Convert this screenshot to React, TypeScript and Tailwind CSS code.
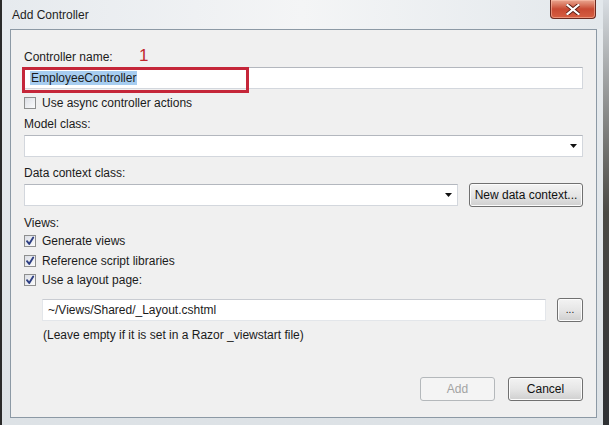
import React from 'react';

const Check = ({ checked }: { checked?: boolean }) => (
  <span className="w-[12px] h-[12px] shrink-0 border border-[#8e8f8f] bg-gradient-to-br from-[#dcdfe6] to-[#fbfbfb] flex items-center justify-center">
    {checked && (
      <svg width="10" height="10" viewBox="0 0 10 10">
        <path d="M2 5.2 L4.2 8 L8.2 1.6" fill="none" stroke="#2e3f82" strokeWidth="1.9" strokeLinecap="round" strokeLinejoin="round" />
      </svg>
    )}
  </span>
);

const Arrow = () => (
  <svg width="7" height="4" viewBox="0 0 7 4" className="shrink-0">
    <path d="M0 0 H7 L3.5 4 Z" fill="#111" />
  </svg>
);

const Btn = ({ children, disabled, className = '' }: { children: React.ReactNode; disabled?: boolean; className?: string }) => (
  <div
    className={`h-[24px] flex items-center justify-center rounded-[3px] border ${
      disabled
        ? 'border-[#b4b8bb] bg-[#f4f4f4] text-[#a3a3a3]'
        : 'border-[#707070] bg-gradient-to-b from-[#f3f3f3] via-[#e6e6e6] to-[#cfcfcf] text-[#111] shadow-[inset_0_0_0_1px_#fcfcfc]'
    } ${className}`}
  >
    {children}
  </div>
);

export default function App() {
  return (
    <div className="w-[609px] h-[425px] flex overflow-hidden bg-[#333] font-['Liberation_Sans',Arial,sans-serif] text-[12px] leading-[16px] text-[#1b1b1b]">
      {/* window */}
      <div className="w-[603px] h-full flex flex-col border-l-2 border-[#2a2a2a] bg-gradient-to-b from-[#e8ecef] to-[#dde2e6] relative">
        {/* title bar */}
        <div className="h-[29px] shrink-0 flex items-center pl-[10px] bg-gradient-to-r from-[#e6eaee] via-[#f4f5f6] to-[#e3e8ec]">
          <span className="text-[12px] text-[#1e1e1e]">Add Controller</span>
        </div>
        <div className="absolute left-[548px] top-0 w-[46px] h-[19px] rounded-b-[4px] border border-t-0 border-[#6a2a20] bg-gradient-to-b from-[#e9a690] via-[#c84a33] to-[#d65f42] flex items-center justify-center shadow-[inset_0_0_0_1px_rgba(255,200,180,0.5)]">
          <svg width="14" height="11" viewBox="0 0 14 11">
            <path d="M1.5 1 L12.5 10 M12.5 1 L1.5 10" stroke="#5a1c12" strokeWidth="4" strokeLinecap="square" />
            <path d="M1.5 1 L12.5 10 M12.5 1 L1.5 10" stroke="#fff" strokeWidth="2.2" strokeLinecap="square" />
          </svg>
        </div>

        {/* content panel */}
        <div className="ml-[8px] w-[587px] h-[389px] border border-[#8c99a5] bg-[#f0f0f0] flex flex-col px-[13px]">
          <div className="mt-[19px] relative">
            Controller name:
            <span className="absolute left-[115px] top-[-2px] text-[17px] leading-[18px] text-[#c0272d]">1</span>
          </div>

          <div className="mt-[2px] h-[22px] relative border border-[#d3d7dd] border-t-[#b3b7be] bg-white flex items-center pl-[5px]">
            <span className="bg-[#a7cdf0] leading-[14px] px-[1px]">EmployeeController</span>
            <div className="absolute left-[-3px] top-[-1px] w-[227px] h-[26px] border-[3px] border-[#c52639]" />
          </div>

          <div className="mt-[6px] flex items-center gap-[6px]">
            <Check />
            <span>Use async controller actions</span>
          </div>

          <div className="mt-[5px]">Model class:</div>
          <div className="mt-[3px] h-[22px] border border-[#d3d7dd] border-t-[#b3b7be] bg-white flex items-center justify-end pr-[5px]">
            <Arrow />
          </div>

          <div className="mt-[8px]">Data context class:</div>
          <div className="mt-[2px] h-[24px] flex items-center gap-[11px]">
            <div className="w-[434px] h-[22px] border border-[#d3d7dd] border-t-[#b3b7be] bg-white flex items-center justify-end pr-[5px]">
              <Arrow />
            </div>
            <Btn className="flex-1">New data context...</Btn>
          </div>

          <div className="mt-[8px]">Views:</div>
          <div className="mt-[2px] flex items-center gap-[6px]">
            <Check checked />
            <span>Generate views</span>
          </div>
          <div className="mt-[4px] flex items-center gap-[6px]">
            <Check checked />
            <span>Reference script libraries</span>
          </div>
          <div className="mt-[3px] flex items-center gap-[6px]">
            <Check checked />
            <span>Use a layout page:</span>
          </div>

          <div className="mt-[10px] ml-[18px] flex items-center gap-[11px]">
            <div className="w-[504px] h-[22px] border border-[#e3e6ea] border-t-[#c9ccd2] bg-white flex items-center pl-[5px]">
              ~/Views/Shared/_Layout.cshtml
            </div>
            <Btn className="w-[26px] h-[23px] text-[10px]">...</Btn>
          </div>
          <div className="mt-[5px] ml-[19px]">(Leave empty if it is set in a Razor _viewstart file)</div>

          <div className="mt-[34px] flex justify-end gap-[13px]">
            <Btn disabled className="w-[75px]">Add</Btn>
            <Btn className="w-[75px]">Cancel</Btn>
          </div>
        </div>
      </div>

      {/* desktop behind the window */}
      <div className="flex-1 h-full bg-gradient-to-b from-[#d8dde2] via-[#4b4a45] to-[#2f3134]" />
    </div>
  );
}
